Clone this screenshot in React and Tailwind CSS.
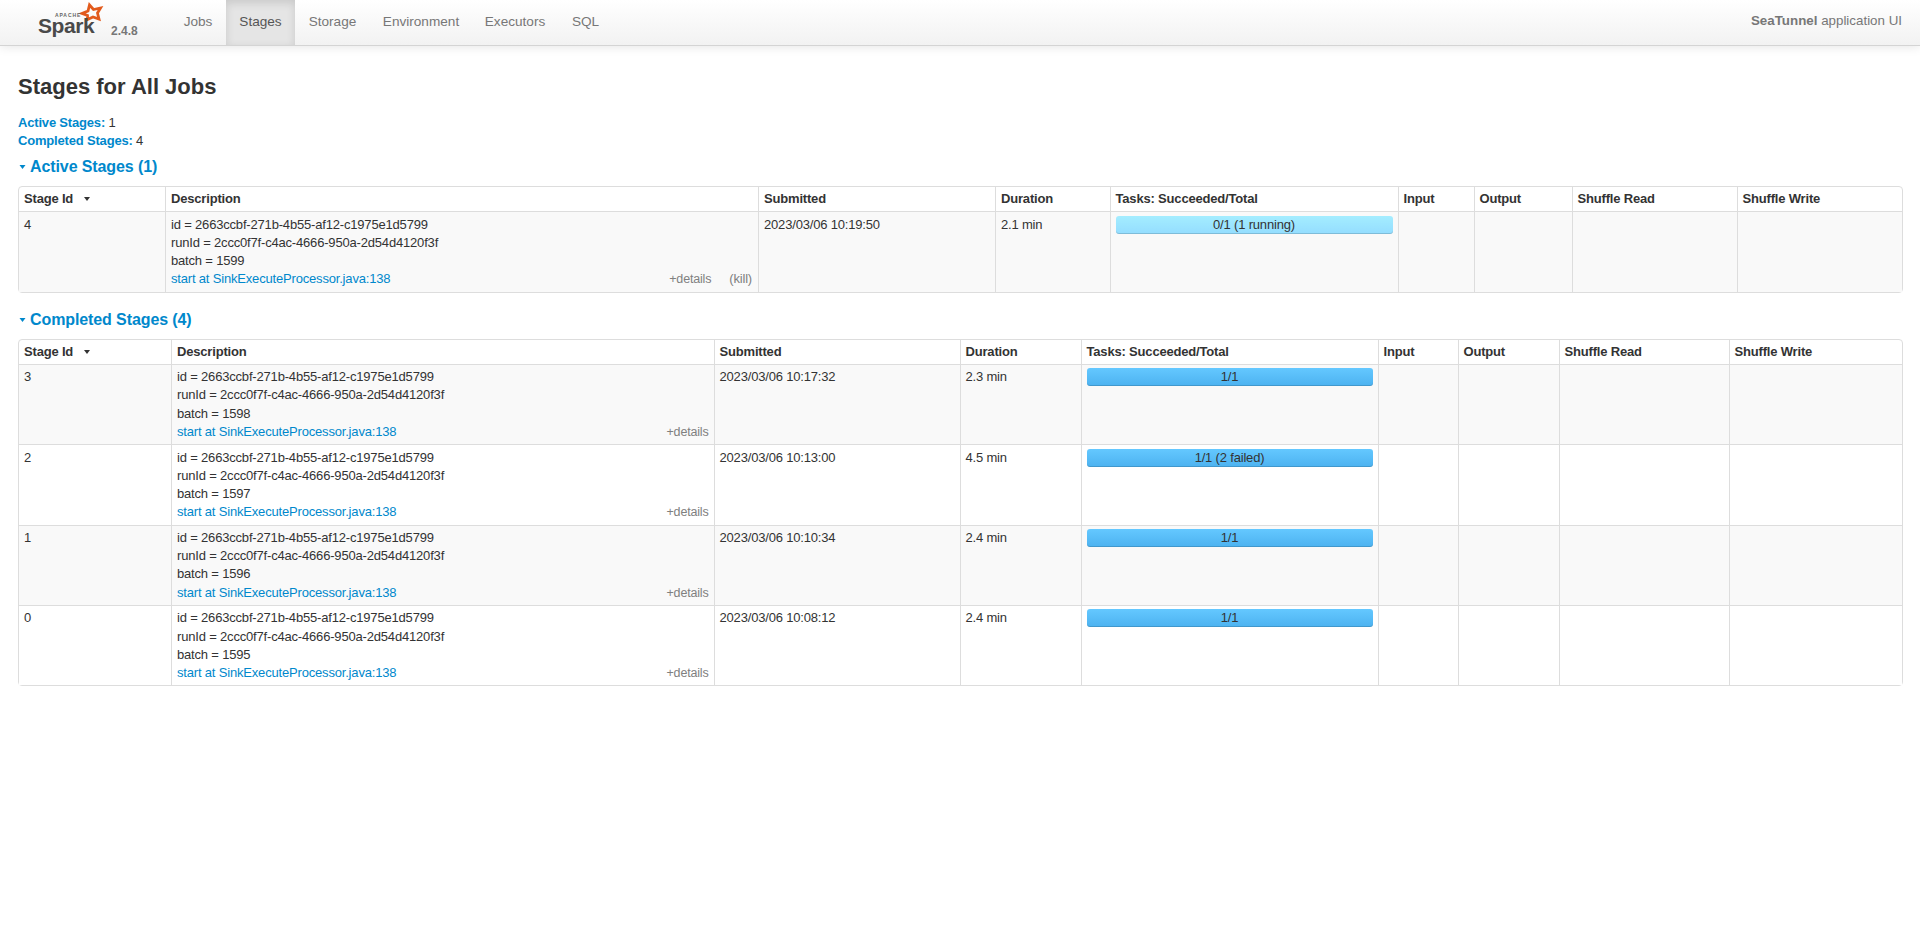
const font = { fontFamily: '"Liberation Sans", Arial, sans-serif' };

function Caret({ className }) {
  return (
    <svg viewBox="0 0 6 4" className={className} aria-hidden="true">
      <path d="M0 0H6L3 4Z" fill="currentColor" />
    </svg>
  );
}

function Logo() {
  return (
    <svg width="70" height="40" viewBox="35 0 70 40" className="block shrink-0" aria-label="Apache Spark">
      <path
        fill="none"
        stroke="#e25a1c"
        strokeWidth="2.8"
        strokeLinejoin="miter"
        d="M89.5 5L93.5 9.5L100.5 8L97.5 13L99 19L93 17L87.5 19.5L87.5 15.5L82 13.5L88 11Z"
      />
      <text x="55" y="17" fontSize="5" fontWeight="700" fill="#666" fontFamily="Liberation Sans" letterSpacing="0.9">APACHE</text>
      <text x="38" y="33" fontSize="21" fontWeight="700" fill="#4a4a4a" fontFamily="Liberation Sans" letterSpacing="-0.4">Spark</text>
    </svg>
  );
}

const navItems = [
  { label: "Jobs", w: "w-[56px]" },
  { label: "Stages", w: "w-[69px]", active: true },
  { label: "Storage", w: "w-[75px]" },
  { label: "Environment", w: "w-[102px]" },
  { label: "Executors", w: "w-[86px]" },
  { label: "SQL", w: "w-[55px]" },
];

function Navbar() {
  return (
    <header className="h-[46px] flex items-start bg-gradient-to-b from-white to-[#f2f2f2] border-b border-[#d4d4d4] shadow-[0_1px_10px_rgba(0,0,0,0.1)] pr-[18px]">
      <div className="pl-[35px] w-[170px] flex">
        <Logo />
        <span className="ml-[6px] mt-[24px] text-[12px] leading-[14px] font-bold text-[#777]">2.4.8</span>
      </div>
      <nav className="flex">
        {navItems.map((n) => (
          <a
            key={n.label}
            className={`h-[45px] flex items-center justify-center text-[13.6px] ${n.w} ${
              n.active
                ? "bg-[#e5e5e5] text-[#555] shadow-[inset_0_3px_8px_rgba(0,0,0,0.125)]"
                : "text-[#777]"
            }`}
          >
            {n.label}
          </a>
        ))}
      </nav>
      <div className="ml-auto h-[43px] flex items-center text-[13.35px] text-[#777]">
        <strong>SeaTunnel</strong>&nbsp;application UI
      </div>
    </header>
  );
}

const th = "border-l first:border-l-0 border-[#ddd] px-[5px] py-[3px] text-left font-bold";
const td = "border-l first:border-l-0 border-t border-[#ddd] px-[5px] py-[3.3px] align-top";

function Bar({ text, running }) {
  return (
    <div
      className={`h-[18px] rounded-[3px] text-center leading-[18px] text-[#333] shadow-[inset_0_-1px_0_rgba(0,0,0,0.15)] bg-gradient-to-b ${
        running ? "from-[#a4edff] to-[#94ddff]" : "from-[#64c8ff] to-[#4cb2f0]"
      }`}
    >
      {text}
    </div>
  );
}

function StageTable({ widths, rows }) {
  const heads = ["Stage Id", "Description", "Submitted", "Duration", "Tasks: Succeeded/Total", "Input", "Output", "Shuffle Read", "Shuffle Write"];
  return (
    <table className="w-full table-fixed border-separate border-spacing-0 border border-[#ddd] rounded-[4px] text-[13px] tracking-[-0.18px] leading-[18.2px] text-[#333]">
      <colgroup>
        {widths.map((w, i) => (
          <col key={i} style={{ width: w }} />
        ))}
      </colgroup>
      <thead>
        <tr>
          {heads.map((h, i) => (
            <th key={h} className={th}>
              {i === 0 ? (
                <span className="flex items-center">
                  {h}
                  <Caret className="w-[6px] h-[4px] ml-[11px] text-[#333]" />
                </span>
              ) : (
                h
              )}
            </th>
          ))}
        </tr>
      </thead>
      <tbody>
        {rows.map((r, i) => (
          <tr key={r.id} className={i % 2 === 0 ? "bg-[#f9f9f9]" : "bg-white"}>
            <td className={td}>{r.id}</td>
            <td className={td}>
              <div>id = 2663ccbf-271b-4b55-af12-c1975e1d5799</div>
              <div>runId = 2ccc0f7f-c4ac-4666-950a-2d54d4120f3f</div>
              <div>batch = {r.batch}</div>
              <div className="flex items-center">
                <a className="text-[#0088cc]">start at SinkExecuteProcessor.java:138</a>
                <span className="ml-auto text-[12.5px] text-[#808080]">+details</span>
                {r.kill && <span className="ml-[18px] mr-[1px] text-[#808080]">(kill)</span>}
              </div>
            </td>
            <td className={td}>{r.date}</td>
            <td className={td}>{r.dur}</td>
            <td className={td}>
              <Bar text={r.tasks} running={r.kill} />
            </td>
            <td className={td}></td>
            <td className={td}></td>
            <td className={td}></td>
            <td className={td}></td>
          </tr>
        ))}
      </tbody>
    </table>
  );
}

function SectionTitle({ children }) {
  return (
    <h4 className="flex items-center h-[20px] text-[16px] tracking-[-0.1px] font-bold text-[#0088cc]">
      <Caret className="w-[7px] h-[4px] ml-[1px] mr-[4px]" />
      {children}
    </h4>
  );
}

const activeWidths = ["146px", "593px", "237px", "114.5px", "288px", "76px", "98px", "165px", "165.5px"];
const completedWidths = ["152px", "542.5px", "246px", "121px", "297px", "80px", "101px", "170px", "173.5px"];

const activeRows = [
  { id: 4, batch: 1599, date: "2023/03/06 10:19:50", dur: "2.1 min", tasks: "0/1 (1 running)", kill: true },
];
const completedRows = [
  { id: 3, batch: 1598, date: "2023/03/06 10:17:32", dur: "2.3 min", tasks: "1/1" },
  { id: 2, batch: 1597, date: "2023/03/06 10:13:00", dur: "4.5 min", tasks: "1/1 (2 failed)" },
  { id: 1, batch: 1596, date: "2023/03/06 10:10:34", dur: "2.4 min", tasks: "1/1" },
  { id: 0, batch: 1595, date: "2023/03/06 10:08:12", dur: "2.4 min", tasks: "1/1" },
];

export default function App() {
  return (
    <div style={font} className="min-h-[929px] bg-white text-[#333]">
      <Navbar />
      <main className="px-[18px] pt-[21px]">
        <h3 className="text-[22px] leading-[40px] font-bold">Stages for All Jobs</h3>
        <ul className="mt-[7px] text-[13px] tracking-[-0.18px] leading-[18px]">
          <li>
            <a className="font-bold text-[#0088cc]">Active Stages:</a> 1
          </li>
          <li>
            <a className="font-bold text-[#0088cc]">Completed Stages:</a> 4
          </li>
        </ul>
        <div className="mt-[7px]">
          <SectionTitle>Active Stages (1)</SectionTitle>
        </div>
        <div className="mt-[9px]">
          <StageTable widths={activeWidths} rows={activeRows} />
        </div>
        <div className="mt-[17px]">
          <SectionTitle>Completed Stages (4)</SectionTitle>
        </div>
        <div className="mt-[9px]">
          <StageTable widths={completedWidths} rows={completedRows} />
        </div>
      </main>
    </div>
  );
}
